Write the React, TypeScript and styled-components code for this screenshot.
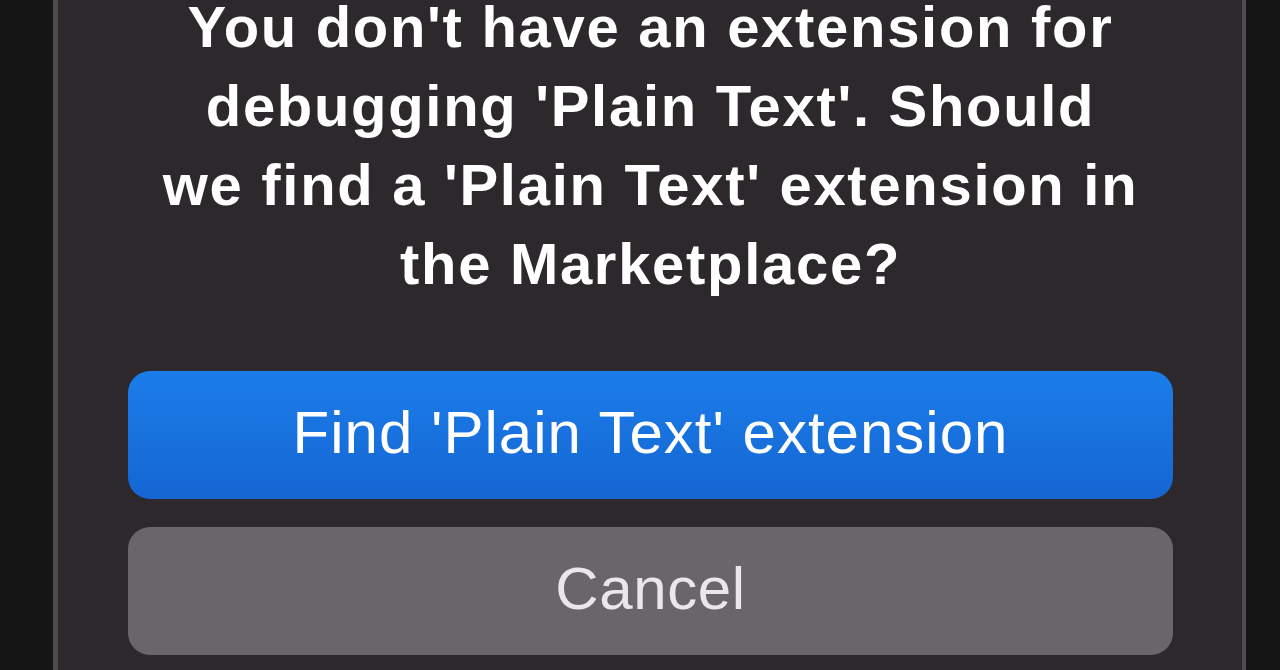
import styled, { createGlobalStyle } from "styled-components";

const GlobalStyle = createGlobalStyle`
  html, body {
    margin: 0;
    padding: 0;
    background: #151516;
  }
  body {
    font-family: "Liberation Sans", Arial, sans-serif;
    -webkit-font-smoothing: antialiased;
  }
`;

const Page = styled.div`
  width: 1280px;
  height: 670px;
  overflow: hidden;
  background: #151516;
`;

const Dialog = styled.div`
  margin-left: 53px;
  width: 1193px;
  height: 670px;
  box-sizing: border-box;
  border-left: 5px solid #4f4c50;
  border-right: 4px solid #4f4c50;
  background: #2d282c;
  padding: 0 69px 0 70px;
  display: flex;
  flex-direction: column;
`;

const Message = styled.p`
  margin: -13px 0 0;
  color: #ffffff;
  font-weight: 700;
  font-size: 58px;
  letter-spacing: 1.7px;
  line-height: 79px;
  text-align: center;
  white-space: nowrap;
`;

const Actions = styled.div`
  margin-top: 68px;
  display: flex;
  flex-direction: column;
  gap: 28px;
`;

const Button = styled.button<{ $primary?: boolean }>`
  height: 128px;
  width: 100%;
  border: none;
  border-radius: 22px;
  padding: 0 0 6px;
  display: flex;
  align-items: center;
  justify-content: center;
  font-family: "Liberation Sans", Arial, sans-serif;
  font-size: 60px;
  font-weight: 400;
  letter-spacing: ${(p) => (p.$primary ? "1px" : "0.6px")};
  color: ${(p) => (p.$primary ? "#ffffff" : "#e9e7e9")};
  background: ${(p) =>
    p.$primary ? "linear-gradient(180deg, #1b7de9 0%, #1566d3 100%)" : "#6a6569"};
  cursor: pointer;
`;

export default function App() {
  return (
    <>
      <GlobalStyle />
      <Page>
        <Dialog>
          <Message>
            You don't have an extension for
            <br />
            debugging 'Plain Text'. Should
            <br />
            we find a 'Plain Text' extension in
            <br />
            the Marketplace?
          </Message>
          <Actions>
            <Button $primary>Find 'Plain Text' extension</Button>
            <Button>Cancel</Button>
          </Actions>
        </Dialog>
      </Page>
    </>
  );
}
